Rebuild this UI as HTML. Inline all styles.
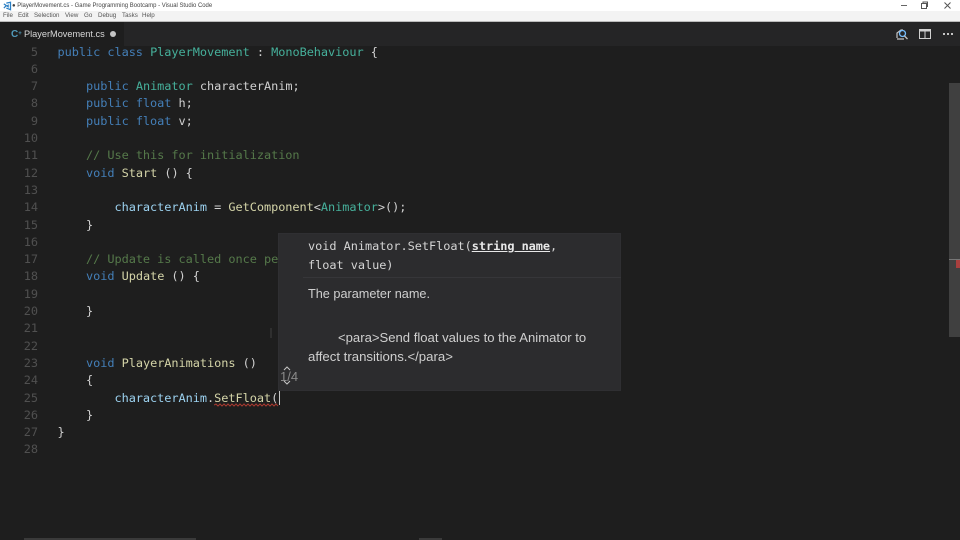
<!DOCTYPE html>
<html><head><meta charset="utf-8"><style>
html,body{margin:0;padding:0;width:960px;height:540px;overflow:hidden;background:#1e1e1e}
*{box-sizing:border-box}
.a{position:absolute;white-space:pre}
.ln{position:absolute;left:18px;width:20px;text-align:right;color:#505050;font:11.9px/17.3px "DejaVu Sans Mono",monospace;letter-spacing:-.04px}
.c{position:absolute;left:57.5px;color:#d0d0d0;font:11.9px/17.3px "DejaVu Sans Mono",monospace;letter-spacing:-.04px;white-space:pre}
.k{color:#447fb8}.t{color:#46b09b}.g{color:#55794a}.y{color:#d4d4a8}.v{color:#9cd2f0}
.s{font-family:"Liberation Sans",sans-serif}
.m{font-family:"DejaVu Sans Mono",monospace}
</style></head><body>
<div class="a" style="left:0;top:0;width:960px;height:11px;background:#fff"></div>
<div class="a" style="left:0;top:11px;width:960px;height:10px;background:#f3f3f3"></div>
<div class="a" style="left:0;top:21px;width:960px;height:1px;background:#bbb"></div>
<div class="a" style="left:0;top:22px;width:960px;height:24px;background:#252526"></div>
<div class="a" style="left:0;top:22px;width:124px;height:24px;background:#1e1e1e"></div>
<svg class="a" style="left:3px;top:1px" width="10" height="10" viewBox="0 0 12 11"><path d="M1 3 L4 5 L1 8 M4 2 L9 1 L9 10 L4 8 M7 4 L5 5.500 L7 7" fill="none" stroke="#2b7fc4" stroke-width="1.500"/></svg>
<div class="a s" style="left:12px;top:1px;font-size:5.950px;line-height:10px;color:#444">● PlayerMovement.cs - Game Programming Bootcamp - Visual Studio Code</div>
<div class="a s" style="left:3px;top:11px;font-size:6.200px;line-height:10px;color:#555">File</div>
<div class="a s" style="left:18px;top:11px;font-size:6.200px;line-height:10px;color:#555">Edit</div>
<div class="a s" style="left:34px;top:11px;font-size:6.200px;line-height:10px;color:#555">Selection</div>
<div class="a s" style="left:65px;top:11px;font-size:6.200px;line-height:10px;color:#555">View</div>
<div class="a s" style="left:84px;top:11px;font-size:6.200px;line-height:10px;color:#555">Go</div>
<div class="a s" style="left:98px;top:11px;font-size:6.200px;line-height:10px;color:#555">Debug</div>
<div class="a s" style="left:122px;top:11px;font-size:6.200px;line-height:10px;color:#555">Tasks</div>
<div class="a s" style="left:142px;top:11px;font-size:6.200px;line-height:10px;color:#555">Help</div>
<div class="a" style="left:901px;top:5px;width:6px;height:1px;background:#666"></div>
<svg class="a" style="left:920px;top:1px" width="9" height="9" viewBox="0 0 9 9"><path d="M1.500 2.500h5v5h-5zM3 2.500V1h4.500v4.500H6.500" fill="none" stroke="#555" stroke-width="1"/></svg>
<svg class="a" style="left:943px;top:1px" width="9" height="9" viewBox="0 0 9 9"><path d="M1.500 1.500l6 6M7.500 1.500l-6 6" fill="none" stroke="#555" stroke-width="1"/></svg>
<div class="a s" style="left:11px;top:27px;font-size:10px;line-height:14px;font-weight:bold;color:#519aba">C<span style="font-size:6px;vertical-align:2px">+</span></div>
<div class="a s" style="left:24px;top:27px;font-size:9.200px;line-height:14px;color:#d8d8d8">PlayerMovement.cs</div>
<div class="a" style="left:110px;top:31px;width:6px;height:6px;border-radius:50%;background:#c5c5c5"></div>
<svg class="a" style="left:895px;top:27px" width="14" height="14" viewBox="0 0 14 14"><path d="M2 11V6l4-3h2" fill="none" stroke="#c5c5c5" stroke-width="1.200"/><circle cx="7.500" cy="6.500" r="3" fill="none" stroke="#75beff" stroke-width="1.300"/><path d="M9.500 9l3 3M2 12h7" stroke="#c5c5c5" stroke-width="1.300"/></svg>
<svg class="a" style="left:919px;top:29px" width="12" height="10" viewBox="0 0 12 10"><path d="M.5.500h11v9H.5zM6 .5v9" fill="none" stroke="#d0d0d0" stroke-width="1"/><path d="M.5.500h11v2H.5z" fill="#d0d0d0"/></svg>
<div class="a" style="left:943px;top:33px;width:2px;height:2px;background:#c5c5c5;box-shadow:4px 0 #c5c5c5,8px 0 #c5c5c5"></div>

<div class="ln" style="top:43.500px">5</div><div class="c" style="top:43.500px"><span class="k">public class</span> <span class="t">PlayerMovement</span> : <span class="t">MonoBehaviour</span> {</div>
<div class="ln" style="top:60.800px">6</div>
<div class="ln" style="top:78.100px">7</div><div class="c" style="top:78.100px">    <span class="k">public</span> <span class="t">Animator</span> characterAnim;</div>
<div class="ln" style="top:95.400px">8</div><div class="c" style="top:95.400px">    <span class="k">public float</span> h;</div>
<div class="ln" style="top:112.700px">9</div><div class="c" style="top:112.700px">    <span class="k">public float</span> v;</div>
<div class="ln" style="top:130px">10</div>
<div class="ln" style="top:147.300px">11</div><div class="c" style="top:147.300px">    <span class="g">// Use this for initialization</span></div>
<div class="ln" style="top:164.600px">12</div><div class="c" style="top:164.600px">    <span class="k">void</span> <span class="y">Start</span> () {</div>
<div class="ln" style="top:181.900px">13</div>
<div class="ln" style="top:199.200px">14</div><div class="c" style="top:199.200px">        <span class="v">characterAnim</span> = <span class="y">GetComponent</span>&lt;<span class="t">Animator</span>&gt;();</div>
<div class="ln" style="top:216.500px">15</div><div class="c" style="top:216.500px">    }</div>
<div class="ln" style="top:233.800px">16</div>
<div class="ln" style="top:251.100px">17</div><div class="c" style="top:251.100px">    <span class="g">// Update is called once per frame</span></div>
<div class="ln" style="top:268.400px">18</div><div class="c" style="top:268.400px">    <span class="k">void</span> <span class="y">Update</span> () {</div>
<div class="ln" style="top:285.700px">19</div>
<div class="ln" style="top:303px">20</div><div class="c" style="top:303px">    }</div>
<div class="ln" style="top:320.300px">21</div>
<div class="ln" style="top:337.600px">22</div>
<div class="ln" style="top:354.900px">23</div><div class="c" style="top:354.900px">    <span class="k">void</span> <span class="y">PlayerAnimations</span> ()</div>
<div class="ln" style="top:372.200px">24</div><div class="c" style="top:372.200px">    {</div>
<div class="ln" style="top:389.500px">25</div><div class="c" style="top:389.500px">        <span class="v">characterAnim</span>.<span class="y">SetFloat</span>(</div>
<div class="ln" style="top:406.800px">26</div><div class="c" style="top:406.800px">    }</div>
<div class="ln" style="top:424.100px">27</div><div class="c" style="top:424.100px">}</div>
<div class="ln" style="top:441.400px">28</div>

<svg class="a" style="left:214px;top:403px" width="65" height="4" viewBox="0 0 65 4"><path d="M0 2 L2 1 L4 3 L6 1 L8 3 L10 1 L12 3 L14 1 L16 3 L18 1 L20 3 L22 1 L24 3 L26 1 L28 3 L30 1 L32 3 L34 1 L36 3 L38 1 L40 3 L42 1 L44 3 L46 1 L48 3 L50 1 L52 3 L54 1 L56 3 L58 1 L60 3 L62 1 L64 3" fill="none" stroke="#a83a30" stroke-width="1"/></svg>
<div class="a" style="left:279px;top:391px;width:1px;height:14px;background:#c8c8c8"></div>
<div class="a" style="left:270px;top:328px;width:2px;height:10px;background:#2f2f2f"></div>

<div class="a" style="left:949px;top:83px;width:11px;height:254px;background:#404040"></div>
<div class="a" style="left:949px;top:259px;width:11px;height:1px;background:#777"></div>
<div class="a" style="left:956px;top:260px;width:4px;height:8px;background:#a83f3e"></div>
<div class="a" style="left:24px;top:538px;width:172px;height:2px;background:#3a3a3a"></div>
<div class="a" style="left:419px;top:538px;width:23px;height:2px;background:#3a3a3a"></div>

<div class="a" style="left:278px;top:233px;width:343px;height:158px;background:#2c2c2e;border:1px solid #2f2f32"></div>
<div class="a" style="left:303px;top:277px;width:318px;height:1px;background:#363639"></div>
<div class="a m" style="left:308px;top:237px;font-size:11.900px;line-height:18px;letter-spacing:-.04px;color:#d4d4d4">void Animator.SetFloat(<b style="text-decoration:underline;color:#e8e8e8">string name</b>,</div>
<div class="a m" style="left:308px;top:256px;font-size:11.900px;line-height:18px;letter-spacing:-.04px;color:#d4d4d4">float value)</div>
<div class="a s" style="left:308px;top:285px;font-size:12.700px;line-height:18px;color:#cfcfcf">The parameter name.</div>
<div class="a s" style="left:338px;top:329px;font-size:13.100px;line-height:18px;color:#cfcfcf">&lt;para&gt;Send float values to the Animator to</div>
<div class="a s" style="left:308px;top:348px;font-size:13.200px;line-height:18px;color:#cfcfcf">affect transitions.&lt;/para&gt;</div>
<div class="a s" style="left:280px;top:369px;font-size:13px;line-height:16px;color:#8a8a8a">1/4</div>
<svg class="a" style="left:282px;top:364px" width="10" height="23" viewBox="0 0 10 23"><path d="M2 6l3-3 3 3M2 17l3 3 3-3" fill="none" stroke="#c5c5c5" stroke-width="1"/></svg>
</body></html>
